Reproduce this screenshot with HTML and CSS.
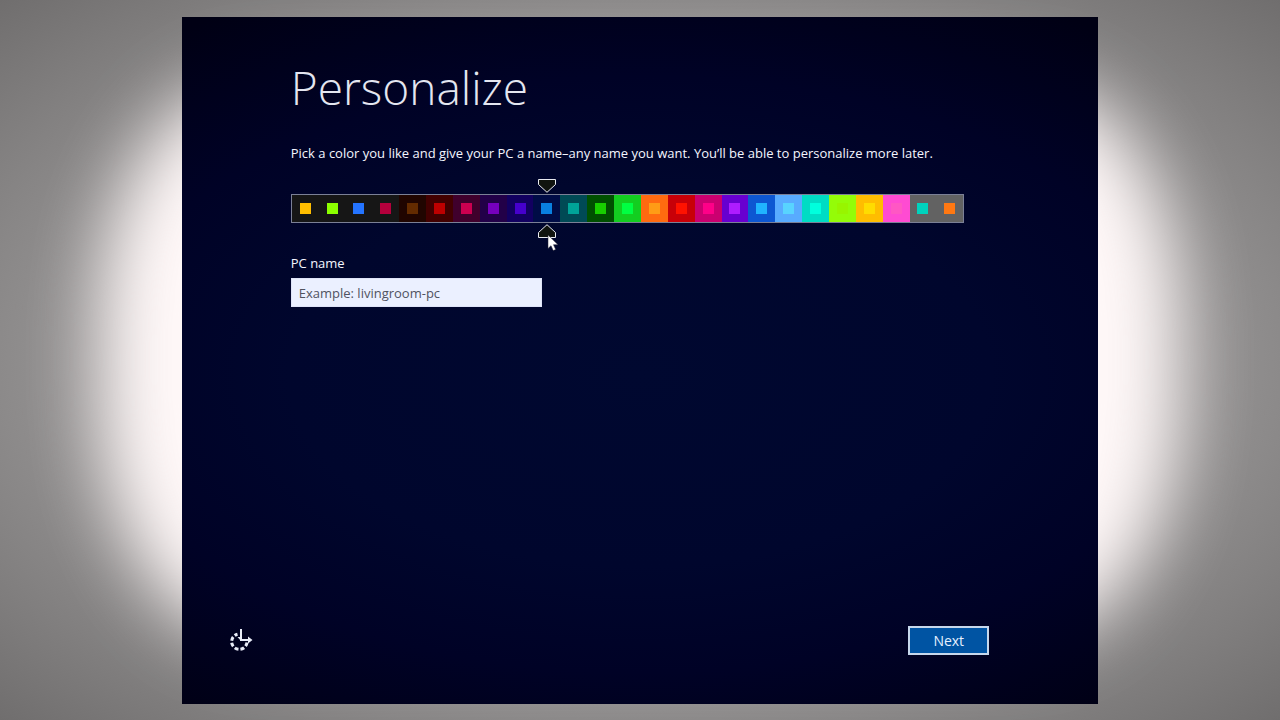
FILE: index.html
```html
<!DOCTYPE html>
<html lang="en">

<head>
    <meta charset="utf-8">
    <title>Personalize</title>
    <link rel="stylesheet" href="styles.css">
</head>

<body>
    <form class="setup">
        <main class="content">
            <h1>Personalize</h1>

            <p>Pick a color you like and give your PC a name–any name you want. You’ll be able to personalize more later.</p>

            <div class="palette" role="radiogroup" aria-label="Color">
                <label class="swatch gray-yellow"><input type="radio" name="color" aria-label="Yellow on black"></label>
                <label class="swatch gray-lime"><input type="radio" name="color" aria-label="Lime on black"></label>
                <label class="swatch gray-blue"><input type="radio" name="color" aria-label="Blue on black"></label>
                <label class="swatch gray-crimson"><input type="radio" name="color" aria-label="Crimson on black"></label>
                <label class="swatch brown"><input type="radio" name="color" aria-label="Brown"></label>
                <label class="swatch dark-red"><input type="radio" name="color" aria-label="Dark red"></label>
                <label class="swatch wine"><input type="radio" name="color" aria-label="Wine"></label>
                <label class="swatch dark-purple"><input type="radio" name="color" aria-label="Dark purple"></label>
                <label class="swatch indigo"><input type="radio" name="color" aria-label="Indigo"></label>
                <label class="swatch navy">
                    <input type="radio" name="color" aria-label="Navy" checked>
                    <svg class="marker marker-top" viewBox="0 0 20 14" aria-hidden="true">
                        <path d="M1.500 .5h17v5L10 13.300 1.500 5.500z" />
                    </svg>
                    <svg class="marker marker-bottom" viewBox="0 0 20 14" aria-hidden="true">
                        <path d="M1.500 13.500h17v-5L10 .7 1.500 8.500z" />
                    </svg>
                    <svg class="cursor" viewBox="0 0 12 18" aria-hidden="true">
                        <path d="M1 1v13.500l3-2.800 2.200 4.900 2.500-1.100-2.200-4.800H11z" />
                    </svg>
                </label>
                <label class="swatch teal"><input type="radio" name="color" aria-label="Teal"></label>
                <label class="swatch dark-green"><input type="radio" name="color" aria-label="Dark green"></label>
                <label class="swatch green"><input type="radio" name="color" aria-label="Green"></label>
                <label class="swatch orange"><input type="radio" name="color" aria-label="Orange"></label>
                <label class="swatch red"><input type="radio" name="color" aria-label="Red"></label>
                <label class="swatch magenta"><input type="radio" name="color" aria-label="Magenta"></label>
                <label class="swatch purple"><input type="radio" name="color" aria-label="Purple"></label>
                <label class="swatch blue"><input type="radio" name="color" aria-label="Blue"></label>
                <label class="swatch sky"><input type="radio" name="color" aria-label="Sky blue"></label>
                <label class="swatch turquoise"><input type="radio" name="color" aria-label="Turquoise"></label>
                <label class="swatch lime"><input type="radio" name="color" aria-label="Lime"></label>
                <label class="swatch yellow"><input type="radio" name="color" aria-label="Yellow"></label>
                <label class="swatch pink"><input type="radio" name="color" aria-label="Pink"></label>
                <label class="swatch gray-teal"><input type="radio" name="color" aria-label="Teal on gray"></label>
                <label class="swatch gray-orange"><input type="radio" name="color" aria-label="Orange on gray"></label>
            </div>

            <label class="name-label" for="pc-name">PC name</label>
            <input class="name-box" type="text" id="pc-name" placeholder="Example: livingroom-pc">
        </main>

        <footer class="actions">
            <button class="ease" type="button" aria-label="Ease of access">
                <svg viewBox="0 0 24 24" aria-hidden="true">
                    <path class="ring" d="M18 13.500A7.700 7.700 0 1 1 8.500 5.200" />
                    <path class="hands" d="M12 0v11H20" />
                    <path class="heads" d="M8.500 8l3.500 4V8zM19 7.500l4.500 3.500-4.500 3.500z" />
                </svg>
            </button>
            <button class="next" type="submit">Next</button>
        </footer>
    </form>
</body>

</html>
```

FILE: styles.css
```css
* {
    box-sizing: border-box;
}

body {
    display: flex;
    min-height: 100vh;
    margin: 0;
    padding: 17px 14.2% 16px;
    overflow-x: hidden;
    background: radial-gradient(ellipse at center, #a09e9e 50%, #706e6e 100%);
    font-family: "Open Sans", "Noto Sans", sans-serif;
    font-size: 13px;
    color: #f4f6ff;
}

/* the glow behind the window */
body:before {
    position: absolute;
    content: "";
    top: 11%;
    bottom: 11%;
    left: 8%;
    right: 8%;
    border-radius: 160px / 240px;
    background: #fff8f8;
    filter: blur(36px);
}

.setup {
    position: relative;
    display: flex;
    flex: 1;
    flex-direction: column;
    justify-content: space-between;
    background: radial-gradient(85% 62% at 50% 52%, #000830 0%, #00062d 45%, #000226 70%, #000014 100%);
}

.content {
    padding: 40px 134px 0 109px;
}

h1 {
    margin: 0;
    font-size: 46px;
    font-weight: 300;
    line-height: 60px;
    color: #e4e6f0;
}

p {
    margin: 26px 0 31px;
    line-height: 20px;
    white-space: nowrap;
}

.palette {
    display: flex;
    height: 29px;
    border: 1px solid #7b8096;
}

.swatch {
    position: relative;
    display: flex;
    flex: 1;
    align-items: center;
    justify-content: center;
    background: var(--back);
}

.swatch input {
    appearance: none;
    width: 11px;
    height: 11px;
    margin: 0;
    background: var(--accent);
}

.marker {
    position: absolute;
    left: calc(50% - 10px);
    width: 20px;
    height: 14px;
    fill: #10140f;
    stroke: #e8eaf0;
}

.marker-top {
    bottom: 29px;
}

.marker-bottom {
    top: 29px;
}

.cursor {
    position: absolute;
    z-index: 1;
    top: 39px;
    left: 50%;
    width: 12px;
    height: 18px;
    fill: #fff;
    stroke: #223;
    stroke-width: .5;
}

.gray-yellow { --back: #161616; --accent: #ffbe00; }
.gray-lime { --back: #161616; --accent: #8cff00; }
.gray-blue { --back: #161616; --accent: #2474ff; }
.gray-crimson { --back: #161616; --accent: #b4003c; }
.brown { --back: #200500; --accent: #632b00; }
.dark-red { --back: #420000; --accent: #bd0000; }
.wine { --back: #40002c; --accent: #cc0050; }
.dark-purple { --back: #220048; --accent: #7600bd; }
.indigo { --back: #120060; --accent: #4600cc; }
.navy { --back: #000c46; --accent: #0980e0; }
.teal { --back: #004a55; --accent: #00a398; }
.dark-green { --back: #005000; --accent: #18cf00; }
.green { --back: #13ce20; --accent: #00ff42; }
.orange { --back: #ff6a10; --accent: #ff9c16; }
.red { --back: #c80008; --accent: #ff1200; }
.magenta { --back: #cb0070; --accent: #ff0088; }
.purple { --back: #6800d0; --accent: #ae1cff; }
.blue { --back: #0d57d2; --accent: #20b4ff; }
.sky { --back: #58abff; --accent: #58d4ff; }
.turquoise { --back: #00dcc4; --accent: #00ffdd; }
.lime { --back: #94fc08; --accent: #98f500; }
.yellow { --back: #ffbd00; --accent: #ffdc00; }
.pink { --back: #ff4bd2; --accent: #ff57c4; }
.gray-teal { --back: #626262; --accent: #00d2bd; }
.gray-orange { --back: #626262; --accent: #ff7812; }

.name-label {
    display: block;
    margin: 30px 0 5px;
    line-height: 20px;
}

.name-box {
    display: block;
    width: 251px;
    height: 29px;
    padding: 0 7px;
    border: 1px solid #dfe4f8;
    background: #ebf0ff;
    font: inherit;
    color: #222;
}

.name-box::placeholder {
    color: #50535f;
}

.actions {
    display: flex;
    align-items: center;
    justify-content: space-between;
    padding: 0 109px 49px 47px;
}

.ease {
    width: 24px;
    height: 24px;
    padding: 0;
    border: 0;
    background: none;
}

.ease svg {
    display: block;
    fill: none;
    stroke: #e8ecf8;
}

.ease .ring {
    stroke-width: 3;
    stroke-dasharray: 4 2;
}

.ease .hands {
    stroke-width: 2;
}

.ease .heads {
    fill: #e8ecf8;
    stroke: none;
}

.next {
    width: 81px;
    height: 29px;
    padding: 0;
    border: 2px solid #c6d8ec;
    background: #0054a3;
    font: inherit;
    font-size: 14px;
    color: #e6f0ff;
}
```
